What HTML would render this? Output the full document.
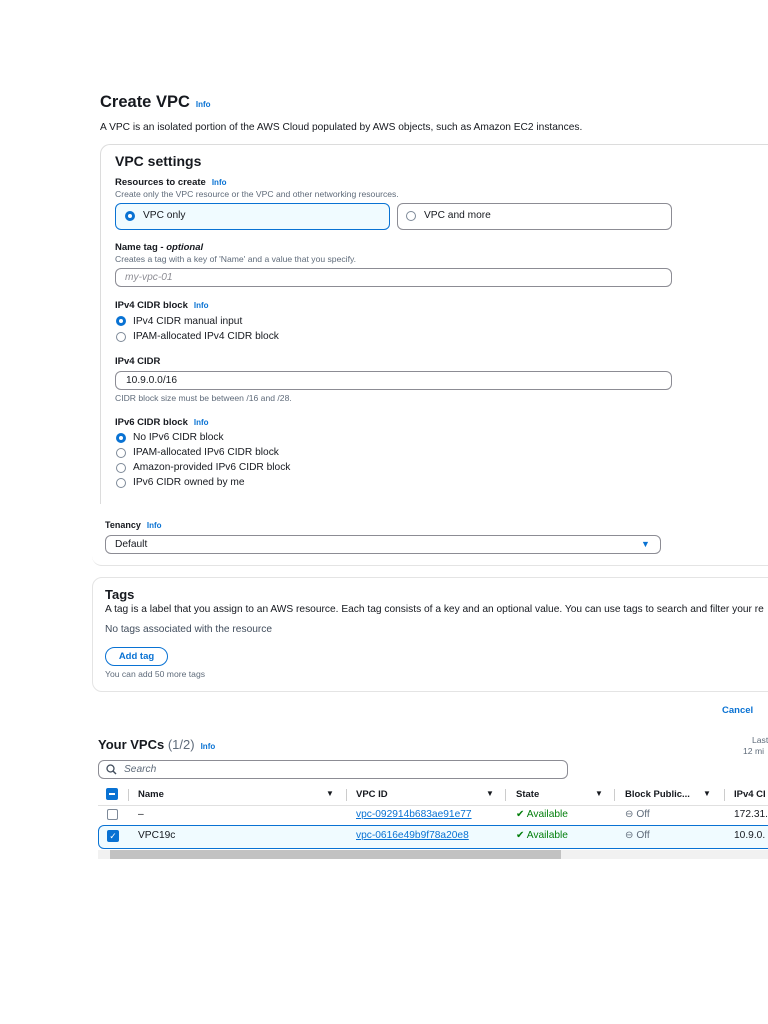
<!DOCTYPE html>
<html><head><meta charset="utf-8"><style>
*{margin:0;padding:0;box-sizing:border-box}
body{width:768px;height:1024px;background:#fff;font-family:"Liberation Sans",sans-serif;color:#16191f;position:relative;overflow:hidden}
.a{position:absolute;white-space:nowrap}
.info{color:#0972d3;font-size:8px;font-weight:bold;margin-left:6px}
.lbl{font-size:9.5px;font-weight:bold}
.sub{font-size:8.6px;color:#5f6b7a}
.t{font-size:10.2px}
.box{position:absolute;border:1px solid #8c8c94;border-radius:6px;background:#fff}
.rad{position:absolute;width:10px;height:10px;border-radius:50%;border:1px solid #7d8998;background:#fff}
.rad.on{border:3px solid #0972d3}
.link{color:#0972d3;text-decoration:underline}
.green{color:#037f0c}
</style></head><body>
<div class="a" style="left:100px;top:93px;font-size:16.5px;font-weight:bold">Create VPC<span class="info">Info</span></div>
<div class="a t" style="left:100px;top:122px">A VPC is an isolated portion of the AWS Cloud populated by AWS objects, such as Amazon EC2 instances.</div>

<div style="position:absolute;left:100px;top:144px;width:700px;height:360px;border-left:1px solid #dcdcdc;border-top:1px solid #dcdcdc;border-top-left-radius:10px"></div>
<div class="a" style="left:115px;top:153px;font-size:14px;font-weight:bold">VPC settings</div>
<div class="a lbl" style="left:115px;top:177px">Resources to create<span class="info">Info</span></div>
<div class="a sub" style="left:115px;top:189px">Create only the VPC resource or the VPC and other networking resources.</div>
<div class="box" style="left:115px;top:203px;width:275px;height:27px;border:1.5px solid #0972d3;background:#f0fbff"></div>
<div class="rad on" style="left:125px;top:211px"></div>
<div class="a t" style="left:143px;top:210px">VPC only</div>
<div class="box" style="left:397px;top:203px;width:275px;height:27px"></div>
<div class="rad" style="left:406px;top:211px"></div>
<div class="a t" style="left:424px;top:210px">VPC and more</div>

<div class="a lbl" style="left:115px;top:242px">Name tag - <i>optional</i></div>
<div class="a sub" style="left:115px;top:254px">Creates a tag with a key of 'Name' and a value that you specify.</div>
<div class="box" style="left:115px;top:268px;width:557px;height:19px"></div>
<div class="a t" style="left:125px;top:272px;color:#8d8d94;font-style:italic">my-vpc-01</div>

<div class="a lbl" style="left:115px;top:300px">IPv4 CIDR block<span class="info">Info</span></div>
<div class="rad on" style="left:116px;top:316px"></div><div class="a t" style="left:133px;top:316px">IPv4 CIDR manual input</div>
<div class="rad" style="left:116px;top:332px"></div><div class="a t" style="left:133px;top:331px">IPAM-allocated IPv4 CIDR block</div>

<div class="a lbl" style="left:115px;top:356px">IPv4 CIDR</div>
<div class="box" style="left:115px;top:371px;width:557px;height:19px"></div>
<div class="a t" style="left:126px;top:375px">10.9.0.0/16</div>
<div class="a sub" style="left:115px;top:393px">CIDR block size must be between /16 and /28.</div>

<div class="a lbl" style="left:115px;top:417px">IPv6 CIDR block<span class="info">Info</span></div>
<div class="rad on" style="left:116px;top:433px"></div><div class="a t" style="left:133px;top:432px">No IPv6 CIDR block</div>
<div class="rad" style="left:116px;top:448px"></div><div class="a t" style="left:133px;top:447px">IPAM-allocated IPv6 CIDR block</div>
<div class="rad" style="left:116px;top:463px"></div><div class="a t" style="left:133px;top:462px">Amazon-provided IPv6 CIDR block</div>
<div class="rad" style="left:116px;top:478px"></div><div class="a t" style="left:133px;top:477px">IPv6 CIDR owned by me</div>

<div class="a lbl" style="left:105px;top:520px;font-size:9px">Tenancy<span class="info">Info</span></div>
<div class="box" style="left:105px;top:535px;width:556px;height:19px"></div>
<div class="a t" style="left:115px;top:539px">Default</div>
<div class="a" style="left:641px;top:539px;color:#0972d3;font-size:9px">▼</div>
<div style="position:absolute;left:92px;top:500px;width:700px;height:66px;border-bottom:1px solid #e4e4e4;border-bottom-left-radius:10px"></div>

<div style="position:absolute;left:92px;top:577px;width:700px;height:115px;border:1px solid #e4e4e4;border-radius:10px"></div>
<div class="a" style="left:105px;top:587px;font-size:13px;font-weight:bold">Tags</div>
<div class="a t" style="left:105px;top:604px">A tag is a label that you assign to an AWS resource. Each tag consists of a key and an optional value. You can use tags to search and filter your re</div>
<div class="a t" style="left:105px;top:624px;color:#414d5c">No tags associated with the resource</div>
<div class="a" style="left:105px;top:647px;width:63px;height:19px;border:1.5px solid #0972d3;border-radius:10px;color:#0972d3;font-weight:bold;font-size:9.5px;text-align:center;line-height:17px">Add tag</div>
<div class="a sub" style="left:105px;top:669px">You can add 50 more tags</div>

<div class="a" style="left:722px;top:705px;color:#0972d3;font-weight:bold;font-size:9.5px">Cancel</div>

<div class="a" style="left:98px;top:737px;font-size:13px;font-weight:bold">Your VPCs <span style="font-weight:normal;color:#5f6b7a">(1/2)</span><span class="info">Info</span></div>
<div class="a sub" style="left:752px;top:735px">Last</div>
<div class="a sub" style="left:743px;top:746px">12 mi</div>
<div class="box" style="left:98px;top:760px;width:470px;height:19px"></div>
<svg class="a" style="left:106px;top:764px" width="11" height="11" viewBox="0 0 11 11"><circle cx="4.5" cy="4.5" r="3.5" fill="none" stroke="#414d5c" stroke-width="1.3"/><path d="M7 7l3 3" stroke="#414d5c" stroke-width="1.4"/></svg>
<div class="a t" style="left:124px;top:764px;color:#5f6b7a;font-style:italic">Search</div>

<div class="a" style="left:106px;top:788px;width:12px;height:12px;background:#0972d3;border-radius:2px"><div style="position:absolute;left:3px;top:5px;width:6px;height:2px;background:#fff"></div></div>
<div class="a lbl" style="left:138px;top:789px;font-weight:bold">Name</div><div class="a" style="left:326px;top:789px;font-size:8px">▼</div>
<div class="a lbl" style="left:356px;top:789px">VPC ID</div><div class="a" style="left:486px;top:789px;font-size:8px">▼</div>
<div class="a lbl" style="left:516px;top:789px">State</div><div class="a" style="left:595px;top:789px;font-size:8px">▼</div>
<div class="a lbl" style="left:625px;top:789px">Block Public...</div><div class="a" style="left:703px;top:789px;font-size:8px">▼</div>
<div class="a lbl" style="left:734px;top:789px">IPv4 CI</div>
<div class="a" style="left:128px;top:789px;width:1px;height:12px;background:#ccc"></div>
<div class="a" style="left:346px;top:789px;width:1px;height:12px;background:#ccc"></div>
<div class="a" style="left:505px;top:789px;width:1px;height:12px;background:#ccc"></div>
<div class="a" style="left:614px;top:789px;width:1px;height:12px;background:#ccc"></div>
<div class="a" style="left:724px;top:789px;width:1px;height:12px;background:#ccc"></div>
<div class="a" style="left:98px;top:805px;width:670px;height:1px;background:#e0e0e0"></div>

<div class="a" style="left:107px;top:809px;width:11px;height:11px;border:1px solid #7d8998;border-radius:2px"></div>
<div class="a t" style="left:138px;top:809px">–</div>
<div class="a t link" style="left:356px;top:809px">vpc-092914b683ae91e77</div>
<div class="a t green" style="left:516px;top:809px">&#10004;&#xFE0E; Available</div>
<div class="a t" style="left:625px;top:809px;color:#5f6b7a">⊖ Off</div>
<div class="a t" style="left:734px;top:809px">172.31.</div>

<div class="a" style="left:98px;top:825px;width:680px;height:24px;border:1.5px solid #0972d3;border-radius:6px;background:#f0fbff"></div>
<div class="a" style="left:107px;top:830px;width:12px;height:12px;background:#0972d3;border-radius:2px;color:#fff;font-size:9px;text-align:center;line-height:12px">✓</div>
<div class="a t" style="left:138px;top:830px">VPC19c</div>
<div class="a t link" style="left:356px;top:830px">vpc-0616e49b9f78a20e8</div>
<div class="a t green" style="left:516px;top:830px">&#10004;&#xFE0E; Available</div>
<div class="a t" style="left:625px;top:830px;color:#5f6b7a">⊖ Off</div>
<div class="a t" style="left:734px;top:830px">10.9.0.</div>
<div class="a" style="left:98px;top:850px;width:670px;height:9px;background:#f1f1f1"></div>
<div class="a" style="left:110px;top:850px;width:451px;height:9px;background:#c2c2c2"></div>
</body></html>
